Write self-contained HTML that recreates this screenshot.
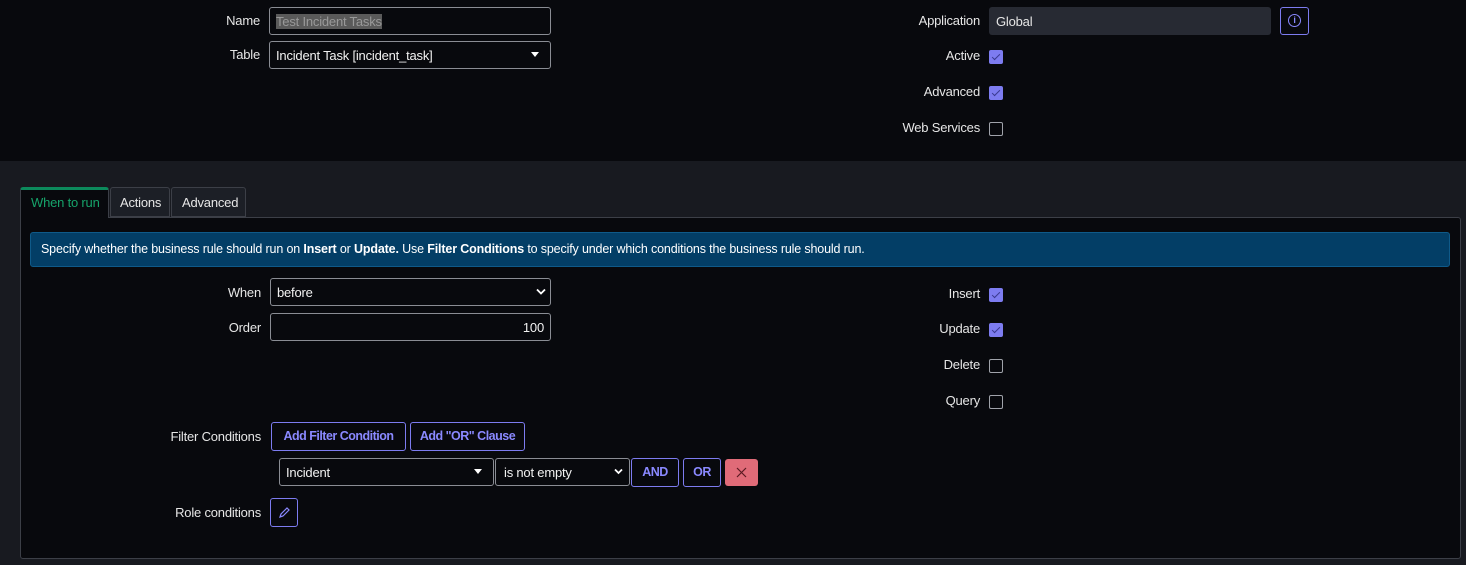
<!DOCTYPE html>
<html><head><style>
*{box-sizing:border-box;margin:0;padding:0}
body{width:1466px;height:565px;background:#181a20;font-family:"Liberation Sans",sans-serif;font-size:13px;color:#e6e6e6;position:relative;overflow:hidden;letter-spacing:-0.2px}
.a{position:absolute}
.top{left:0;top:0;width:1466px;height:161px;background:#08090d}
.lbl{position:absolute;text-align:right;width:200px}
.inp{position:absolute;border:1px solid #8a8d94;border-radius:3px;background:#08090d;height:28px;padding:6px 6px;color:#f2f2f2}
.cb{position:absolute;width:14px;height:14px;border:1px solid #a0a3aa;border-radius:2px;background:#08090d}
.cb.on{background:#7d7cf0;border-color:#7d7cf0}
.cb.on:after{content:"";position:absolute;left:4px;top:1px;width:3px;height:7px;border:solid #3a3a90;border-width:0 1px 1px 0;transform:rotate(45deg)}
.btn{position:absolute;border:1px solid #7d7cf0;border-radius:3px;color:#8a89ff;font-weight:bold;height:29px;text-align:center;line-height:27px;font-size:12.5px;letter-spacing:-0.5px}
.tri{position:absolute;width:0;height:0;border-left:4px solid transparent;border-right:4px solid transparent;border-top:5px solid #fff}
</style></head><body>
<div class="a top"></div>
<div class="lbl" style="left:60px;top:13px">Name</div>
<div class="inp" style="left:269px;top:7px;width:282px;"><span style="background:#5a5a5a;color:#999">Test Incident Tasks</span></div>
<div class="lbl" style="left:60px;top:47px">Table</div>
<div class="inp" style="left:269px;top:41px;width:282px;">Incident Task [incident_task]</div>
<div class="tri" style="left:531px;top:52px"></div>

<div class="lbl" style="left:780px;top:13px">Application</div>
<div class="a" style="left:989px;top:7px;width:282px;height:28px;background:#272a33;border-radius:3px;padding:7px 7px">Global</div>
<div class="a" style="left:1280px;top:7px;width:29px;height:28px;border:1px solid #7d7cf0;border-radius:3px"><div class="a" style="left:7px;top:6px;width:13px;height:13px;border:1.3px solid #8a89ff;border-radius:50%;color:#8a89ff;font-size:9px;text-align:center;line-height:10px;font-weight:bold">i</div></div>
<div class="lbl" style="left:780px;top:48px">Active</div><div class="cb on" style="left:989px;top:50px"></div>
<div class="lbl" style="left:780px;top:84px">Advanced</div><div class="cb on" style="left:989px;top:86px"></div>
<div class="lbl" style="left:780px;top:120px">Web Services</div><div class="cb" style="left:989px;top:122px"></div>

<div class="a" style="left:20px;top:217px;width:1441px;height:342px;background:#08090d;border:1px solid #3c3f47;border-radius:0 3px 3px 3px"></div>
<div class="a" style="left:20px;top:187px;width:89px;height:31px;background:#08090d;border:1px solid #3c3f47;border-top:3px solid #0c8a5c;border-bottom:none;border-radius:3px 3px 0 0;color:#16a36a;padding:5px 0 0 10px">When to run</div>
<div class="a" style="left:110px;top:187px;width:60px;height:30px;background:#1c1f26;border:1px solid #3c3f47;border-radius:3px 3px 0 0;padding:7px 0 0 9px">Actions</div>
<div class="a" style="left:171px;top:187px;width:75px;height:30px;background:#1c1f26;border:1px solid #3c3f47;border-radius:3px 3px 0 0;padding:7px 0 0 10px">Advanced</div>

<div class="a" style="left:30px;top:232px;width:1420px;height:35px;background:#033e66;border:1px solid #0f5a89;border-radius:3px;padding:9px 10px;color:#fff;font-size:12.5px;letter-spacing:-0.15px">Specify whether the business rule should run on <b>Insert</b> or <b>Update.</b> Use <b>Filter Conditions</b> to specify under which conditions the business rule should run.</div>

<div class="lbl" style="left:61px;top:285px">When</div>
<div class="inp" style="left:270px;top:278px;width:281px;">before</div>
<svg class="a" style="left:536px;top:288px" width="10" height="8"><path d="M1 1.5L5 5.5L9 1.5" stroke="#fff" stroke-width="1.8" fill="none"/></svg>
<div class="lbl" style="left:61px;top:320px">Order</div>
<div class="inp" style="left:270px;top:313px;width:281px;text-align:right">100</div>

<div class="lbl" style="left:780px;top:286px">Insert</div><div class="cb on" style="left:989px;top:288px"></div>
<div class="lbl" style="left:780px;top:321px">Update</div><div class="cb on" style="left:989px;top:323px"></div>
<div class="lbl" style="left:780px;top:357px">Delete</div><div class="cb" style="left:989px;top:359px"></div>
<div class="lbl" style="left:780px;top:393px">Query</div><div class="cb" style="left:989px;top:395px"></div>

<div class="lbl" style="left:61px;top:429px">Filter Conditions</div>
<div class="btn" style="left:271px;top:422px;width:135px">Add Filter Condition</div>
<div class="btn" style="left:410px;top:422px;width:115px">Add "OR" Clause</div>
<div class="inp" style="left:279px;top:458px;width:215px;">Incident</div>
<div class="tri" style="left:474px;top:469px"></div>
<div class="inp" style="left:495px;top:458px;width:135px;padding-left:8px">is not empty</div>
<svg class="a" style="left:614px;top:468px" width="9" height="7"><path d="M1 1.5L4.5 5L8 1.5" stroke="#fff" stroke-width="1.8" fill="none"/></svg>
<div class="btn" style="left:631px;top:458px;width:48px">AND</div>
<div class="btn" style="left:683px;top:458px;width:38px">OR</div>
<div class="a" style="left:725px;top:459px;width:33px;height:27px;background:#e06b78;border-radius:3px"><svg class="a" style="left:11px;top:8px" width="11" height="11"><path d="M1 1L10 10M10 1L1 10" stroke="#5a1a22" stroke-width="1.2"/></svg></div>

<div class="lbl" style="left:61px;top:505px">Role conditions</div>
<div class="a" style="left:270px;top:498px;width:28px;height:29px;border:1px solid #7d7cf0;border-radius:3px"><svg class="a" style="left:7px;top:7px" width="13" height="13"><path d="M2 11L3 8L9 2L11 4L5 10Z" stroke="#8a89ff" stroke-width="1.2" fill="none"/></svg></div>
</body></html>
